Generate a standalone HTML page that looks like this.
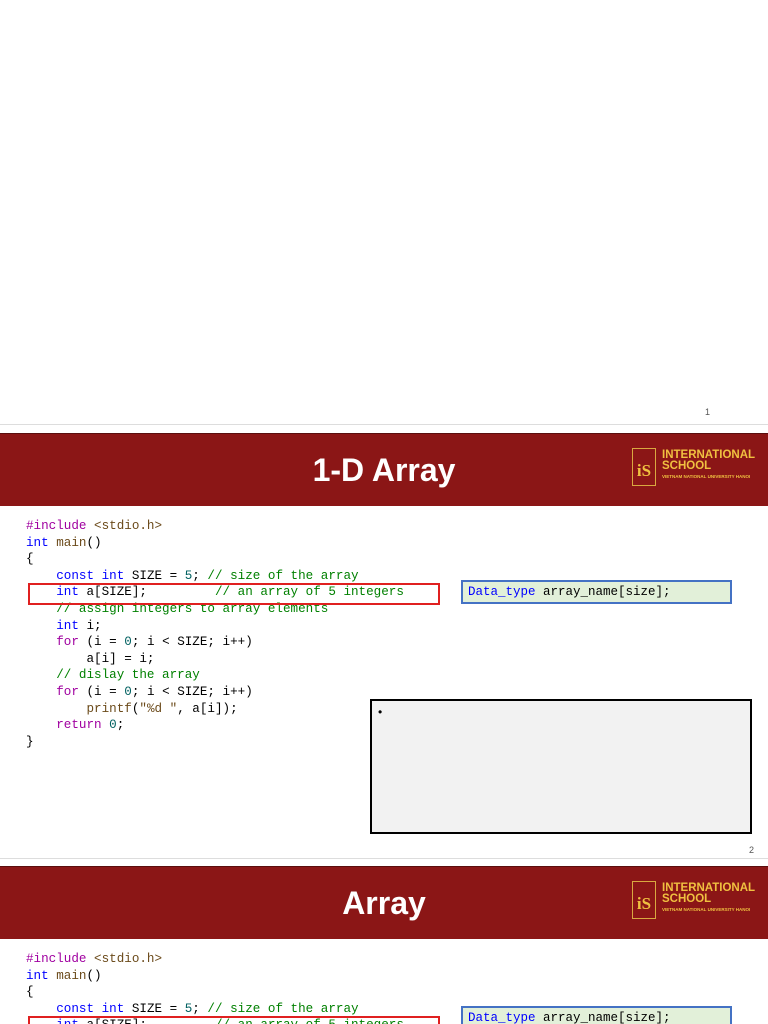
<!DOCTYPE html><html style="height:1024px;overflow:hidden"><head><style>
body{margin:0;width:768px;height:1024px;overflow:hidden;background:#fff;font-family:"Liberation Sans",sans-serif;position:relative}
.s{position:absolute;left:0;width:768px;height:433px}
.hd{position:absolute;left:0;top:0;width:768px;height:72px;background:#8b1616;border-top:1px solid #5a0e0e}
.hd h1{margin:0;position:absolute;left:0;width:768px;text-align:center;top:18px;color:#fff;font-size:32px;font-weight:bold}
.logo{position:absolute;left:632px;top:14px;color:#f0c040;font-weight:bold}
.logo .m{position:absolute;left:0;top:0;width:22px;height:36px;border:1px solid #d9a840;font-size:17px;text-align:center;line-height:44px;font-family:"Liberation Serif",serif}
.logo .t{position:absolute;left:30px;top:2px;font-size:11.5px;line-height:11px;white-space:nowrap}
.logo .u{position:absolute;left:30px;top:26px;font-size:4.5px;white-space:nowrap}
pre{position:absolute;left:26px;margin:0;font-family:"Liberation Mono",monospace;font-size:12.6px;line-height:16.6px;color:#000}
.k{color:#0000ff}.p{color:#a000a0}.c{color:#008000}.f{color:#6b4a1a}.n{color:#006060}
.rb{position:absolute;left:28px;width:408px;height:18px;border:2px solid #e02020}
.bb{position:absolute;left:461px;width:262px;height:20px;border:2px solid #4472c4;background:#e2f0d9;font-family:"Liberation Mono",monospace;font-size:12.5px;line-height:20px;padding-left:5px}
.gb{position:absolute;left:370px;width:378px;height:131px;border:2px solid #000;background:#f2f2f2}
.num{position:absolute;font-size:9px;color:#555}
</style></head><body>
<div class="num" style="left:705px;top:407px">1</div>
<div style="position:absolute;left:0;top:424px;width:768px;height:1px;background:#ddd"></div>

<div class="s" style="top:433px">
<div class="hd"><h1>1-D Array</h1><div class="logo"><div class="m">iS</div><div class="t">INTERNATIONAL<br>SCHOOL</div><div class="u">VIETNAM NATIONAL UNIVERSITY HANOI</div></div></div>
<pre style="top:85px"><span class="p">#include</span> <span class="f">&lt;stdio.h&gt;</span>
<span class="k">int</span> <span class="f">main</span>()
{
    <span class="k">const int</span> SIZE = <span class="n">5</span>; <span class="c">// size of the array</span>
    <span class="k">int</span> a[SIZE];         <span class="c">// an array of 5 integers</span>
    <span class="c">// assign integers to array elements</span>
    <span class="k">int</span> i;
    <span class="p">for</span> (i = <span class="n">0</span>; i &lt; SIZE; i++)
        a[i] = i;
    <span class="c">// dislay the array</span>
    <span class="p">for</span> (i = <span class="n">0</span>; i &lt; SIZE; i++)
        <span class="f">printf</span>(<span class="f">"%d "</span>, a[i]);
    <span class="p">return</span> <span class="n">0</span>;
}</pre>
<div class="rb" style="top:150px"></div>
<div class="bb" style="top:147px"><span class="k">Data_type</span> array_name[size];</div>
<div class="gb" style="top:266px"><div style="position:absolute;left:6px;top:4px;font-size:12px">•</div></div>
<div class="num" style="left:749px;top:412px">2</div>
</div>
<div style="position:absolute;left:0;top:858px;width:768px;height:1px;background:#ddd"></div>

<div class="s" style="top:866px;height:158px;overflow:hidden">
<div class="hd"><h1>Array</h1><div class="logo"><div class="m">iS</div><div class="t">INTERNATIONAL<br>SCHOOL</div><div class="u">VIETNAM NATIONAL UNIVERSITY HANOI</div></div></div>
<pre style="top:85px"><span class="p">#include</span> <span class="f">&lt;stdio.h&gt;</span>
<span class="k">int</span> <span class="f">main</span>()
{
    <span class="k">const int</span> SIZE = <span class="n">5</span>; <span class="c">// size of the array</span>
    <span class="k">int</span> a[SIZE];         <span class="c">// an array of 5 integers</span></pre>
<div class="rb" style="top:150px"></div>
<div class="bb" style="top:140px"><span class="k">Data_type</span> array_name[size];</div>
</div>
</body></html>
